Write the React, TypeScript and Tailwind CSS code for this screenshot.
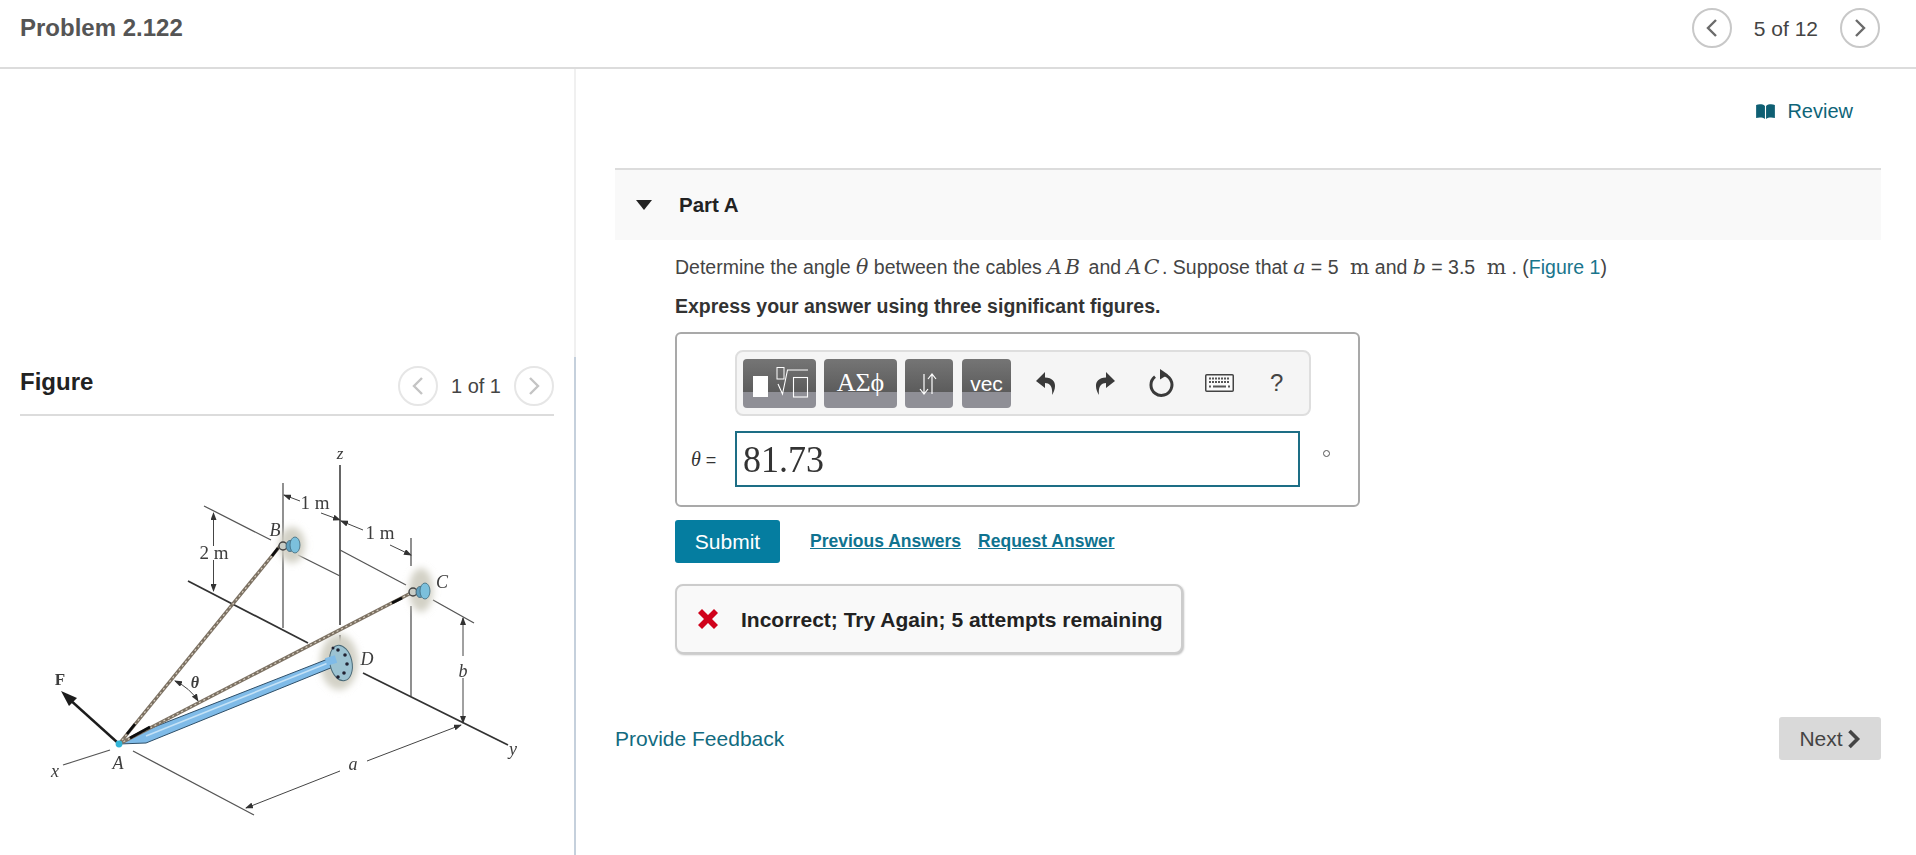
const sans = "font-['Liberation_Sans',Arial,sans-serif]";
const math = "font-['DejaVu_Serif',serif] text-[20.5px]";

const Chevron = ({ dir, color }: { dir: "left" | "right"; color: string }) => (
  <svg width="14" height="20" viewBox="0 0 14 20" fill="none">
    <path
      d={dir === "left" ? "M11 2 L3 10 L11 18" : "M3 2 L11 10 L3 18"}
      stroke={color}
      strokeWidth="2.4"
    />
  </svg>
);

const Pager = ({ label, light, gap, size }: { label: string; light?: boolean; gap: string; size: string }) => (
  <div className={`flex items-center ${gap}`}>
    <div className={`flex h-[40px] w-[40px] items-center justify-center rounded-full border-2 ${light ? "border-[#e6e6e6]" : "border-[#c8c8c8]"}`}>
      <Chevron dir="left" color={light ? "#c4c4c4" : "#6b6b6b"} />
    </div>
    <span className={`${size} leading-none text-[#444]`}>{label}</span>
    <div className={`flex h-[40px] w-[40px] items-center justify-center rounded-full border-2 ${light ? "border-[#e6e6e6]" : "border-[#c8c8c8]"}`}>
      <Chevron dir="right" color={light ? "#c4c4c4" : "#6b6b6b"} />
    </div>
  </div>
);

const Bolt = ({ x, y }: { x: number; y: number }) => (
  <g>
    <circle cx={x} cy={y} r="4" fill="#c9cdc6" stroke="#444" strokeWidth="1.4" />
    <ellipse cx={x + 7} cy={y} rx="4" ry="5.5" fill="#5e9fbd" stroke="#3d6172" strokeWidth="0.8" />
    <ellipse cx={x + 12} cy={y - 1} rx="5" ry="8" fill="#7cc0dc" stroke="#41697b" strokeWidth="0.8" />
  </g>
);

const Figure = () => (
  <svg width="540" height="425" viewBox="20 430 540 425" className="block">
    <defs>
      <filter id="soft" x="-5%" y="-5%" width="110%" height="110%">
        <feGaussianBlur stdDeviation="0.4" />
      </filter>
      <filter id="halo" x="-50%" y="-50%" width="200%" height="200%">
        <feGaussianBlur stdDeviation="3.5" />
      </filter>
      <marker id="tip" markerWidth="8" markerHeight="6" refX="7" refY="3" orient="auto-start-reverse">
        <path d="M0 0 L8 3 L0 6 Z" fill="#333" />
      </marker>
    </defs>
    <g filter="url(#soft)">
      {/* back and floor lines */}
      <g stroke="#555" strokeWidth="1.3" fill="none">
        <path d="M204 508 L271 542 M298 557 L340 578 M340 552 L406 587 M433 602 L474 625" />
        <path d="M283 485 L283 630" />
        <path d="M411 540 L411 568 M411 608 L411 698" />
        <path d="M340 467 L340 627 M340 637 L340 647" strokeWidth="1.8" />
        <path d="M63 767 L110 752 M133 753 L254 817" />
      </g>
      <path d="M188 583 L308 645 M363 675 L508 747" stroke="#333" strokeWidth="1.8" fill="none" />
      {/* dimension lines */}
      <g stroke="#444" strokeWidth="1" fill="none">
        <path d="M213.5 548 L213.5 515" markerEnd="url(#tip)" />
        <path d="M213.5 562 L213.5 593" markerEnd="url(#tip)" />
        <path d="M463 658 L463 620" markerEnd="url(#tip)" />
        <path d="M463 680 L463 725" markerEnd="url(#tip)" />
        <path d="M300 503 L284 497" markerEnd="url(#tip)" />
        <path d="M321 515 L340 522" markerEnd="url(#tip)" />
        <path d="M363 532 L341 523" markerEnd="url(#tip)" />
        <path d="M390 547 L411 557" markerEnd="url(#tip)" />
        <path d="M340 773 L246 810" markerEnd="url(#tip)" />
        <path d="M367 763 L461 727" markerEnd="url(#tip)" />
        <path d="M175 683 Q190 690 198 703" markerStart="url(#tip)" markerEnd="url(#tip)" />
      </g>
      {/* halos behind the anchors */}
      <g filter="url(#halo)" fill="#d3d1c6">
        <ellipse cx="292" cy="547" rx="13" ry="18" />
        <ellipse cx="421" cy="592" rx="12" ry="22" />
        <ellipse cx="339" cy="664" rx="19" ry="28" />
      </g>
      {/* rod AD */}
      <path d="M119 746 L144 733 L333 659 L333 669 L146 745 Z" fill="#7fbbe8" stroke="#2f4f68" strokeWidth="1" />
      <path d="M146 738 L333 663" stroke="#c5e2f6" strokeWidth="1.6" />
      <ellipse cx="341" cy="665" rx="11" ry="18" fill="#9cc3d2" stroke="#4a6a78" strokeWidth="1" transform="rotate(-12 341 665)" />
      <g fill="#223">
        <circle cx="338" cy="652" r="1.8" />
        <circle cx="345" cy="657" r="1.8" />
        <circle cx="347" cy="666" r="1.8" />
        <circle cx="344" cy="675" r="1.8" />
        <circle cx="338" cy="679" r="1.8" />
        <circle cx="333" cy="650" r="1.5" />
      </g>
      <path d="M326 664 L336 661" stroke="#7fbbe8" strokeWidth="8" />
      {/* cables */}
      <path d="M119 746 L280 548 M119 746 L411 595" stroke="#7d7264" strokeWidth="3.4" fill="none" />
      <path d="M119 746 L280 548 M119 746 L411 595" stroke="#d8cfc0" strokeWidth="1.2" strokeDasharray="2 3" fill="none" />
      <path d="M272 558 L278 550 M392 605 L402 600 M127 736 L135 726 M130 740 L150 729" stroke="#111" strokeWidth="2.8" />
      {/* anchors B and C */}
      <Bolt x={283} y={548} />
      <Bolt x={413} y={594} />
      {/* force F */}
      <path d="M118 745 L68 700" stroke="#1c1c1c" strokeWidth="2.4" />
      <path d="M61 693 L77 700 L69 708 Z" fill="#1c1c1c" />
      <circle cx="119" cy="746" r="3.4" fill="#31b4d8" />
      {/* labels */}
      <g fill="#3c3c3c" fontFamily="'Liberation Serif', serif" fontSize="18" textAnchor="middle">
        <text x="340" y="461" fontStyle="italic" fontSize="17">z</text>
        <text x="315" y="511" fontSize="19">1 m</text>
        <text x="380" y="541" fontSize="19">1 m</text>
        <text x="214" y="561" fontSize="19">2 m</text>
        <text x="275" y="538" fontStyle="italic">B</text>
        <text x="442" y="590" fontStyle="italic">C</text>
        <text x="367" y="667" fontStyle="italic">D</text>
        <text x="463" y="679" fontStyle="italic">b</text>
        <text x="353" y="772" fontStyle="italic">a</text>
        <text x="118" y="771" fontStyle="italic">A</text>
        <text x="55" y="779" fontStyle="italic">x</text>
        <text x="513" y="757" fontStyle="italic">y</text>
        <text x="195" y="690" fontStyle="italic" fontWeight="bold" fontSize="16">θ</text>
        <text x="60" y="687" fontWeight="bold" fontSize="17">F</text>
      </g>
    </g>
  </svg>
);

const ToolButton = ({ w, children }: { w: string; children: React.ReactNode }) => (
  <div className={`flex h-[49px] ${w} items-center justify-center overflow-hidden rounded-[4px] bg-[linear-gradient(#757575_0,#5c5c5c_33px,#8f8f96_33px)] text-white`}>
    {children}
  </div>
);

const Toolbar = () => (
  <div className="flex h-[66px] w-[576px] items-center rounded-[8px] border-2 border-[#dedede] bg-[#f5f5f5] pl-[6px]">
    <div className="flex">
      <ToolButton w="w-[73px]">
        <svg width="73" height="49" viewBox="0 0 73 49">
          <rect x="10" y="17" width="15" height="21" fill="#fff" />
          <rect x="34" y="8.5" width="7" height="11.5" fill="none" stroke="#fff" strokeWidth="1" />
          <path d="M35 25 L39.5 35 L44.5 11 L65 11" fill="none" stroke="#fff" strokeWidth="1.1" />
          <rect x="50.5" y="18.5" width="14" height="19.5" fill="none" stroke="#fff" strokeWidth="1.1" />
        </svg>
      </ToolButton>
      <div className="ml-[8px]">
        <ToolButton w="w-[73px]">
          <span className="font-['Liberation_Serif',serif] text-[26px] leading-none">ΑΣϕ</span>
        </ToolButton>
      </div>
      <div className="ml-[8px]">
        <ToolButton w="w-[48px]">
          <svg width="48" height="49" viewBox="0 0 48 49" fill="none" stroke="#fff" strokeWidth="1.2">
            <path d="M19 15 L19 35 M15 30 L19 35 L23 30" />
            <path d="M27 35 L27 15 M23 20 L27 15 L31 20" />
          </svg>
        </ToolButton>
      </div>
      <div className="ml-[9px]">
        <ToolButton w="w-[49px]">
          <span className="text-[21px] leading-none">vec</span>
        </ToolButton>
      </div>
    </div>
    <div className="ml-[7px] grid grid-cols-5 items-center">
      <div className="flex w-[57.5px] justify-center">
        <svg width="21" height="23" viewBox="0 0 21 23" fill="#3a3a3a">
          <path d="M9 0 L0 9 L9 16 L9 11 C14 11 17 15 16 23 C20 17 22 6 9 5.5 Z" />
        </svg>
      </div>
      <div className="flex w-[57.5px] justify-center">
        <svg width="21" height="23" viewBox="0 0 21 23" fill="#3a3a3a">
          <path d="M12 0 L21 9 L12 16 L12 11 C7 11 4 15 5 23 C1 17 -1 6 12 5.5 Z" />
        </svg>
      </div>
      <div className="flex w-[57.5px] justify-center">
        <svg width="26" height="28" viewBox="0 0 26 28" fill="none">
          <path d="M14 5.5 A10.5 10.5 0 1 1 6 7.6" stroke="#3a3a3a" strokeWidth="3" />
          <path d="M11 0 L19 5.5 L11 10.5 Z" fill="#3a3a3a" />
        </svg>
      </div>
      <div className="flex w-[57.5px] justify-center">
        <svg width="29" height="18" viewBox="0 0 29 18" fill="none">
          <rect x="0.75" y="0.75" width="27.5" height="16.5" rx="1" fill="#fafafa" stroke="#444" strokeWidth="1.5" />
          <path d="M4 4.5 H25 M4 8 H25" stroke="#555" strokeWidth="1.8" strokeDasharray="2 1" />
          <path d="M4 12.5 H6 M8 12.5 H21 M23 12.5 H25" stroke="#555" strokeWidth="1.8" />
        </svg>
      </div>
      <div className="flex w-[57.5px] justify-center text-[24px] leading-none text-[#444]">?</div>
    </div>
  </div>
);

export default function App() {
  return (
    <div className={`h-[855px] w-full overflow-hidden bg-white ${sans}`}>
      <header className="flex h-[69px] items-center justify-between border-b-2 border-[#dcdcdc] pb-[19px] pl-[20px] pr-[36px] pt-[8px]">
        <h1 className="text-[24px] font-bold text-[#555]">Problem 2.122</h1>
        <Pager label="5 of 12" size="text-[21px]" gap="gap-[22px]" />
      </header>

      <div className="flex h-[786px]">
        <aside className="flex w-[576px] flex-col">
          <div className="h-[288px] border-r-2 border-[#f0f0f0]" />
          <div className="flex-1 border-r-2 border-[#c5d0dc] pl-[20px] pr-[20px]">
            <div className="flex h-[59px] items-start justify-between border-b-2 border-[#dcdcdc] pt-[7px]">
              <h2 className="text-[24px] font-bold text-[#222]">Figure</h2>
              <div className="pt-[2px]">
                <Pager label="1 of 1" size="text-[20px]" light gap="gap-[13px]" />
              </div>
            </div>
            <div className="mt-[12px]">
              <Figure />
            </div>
          </div>
        </aside>

        <main className="flex-1 pl-[39px] pr-[35px]">
          <div className="flex h-[99px] items-start justify-end pr-[28px] pt-[30px]">
            <div className="flex items-center gap-[12px] text-[20px] leading-[24px] text-[#0e6478]">
              <svg width="19" height="15" viewBox="0 0 20 16" fill="#0e5f73">
                <path d="M0 1 C3 0 7 0 9.4 2 L9.4 16 C7 14 3 14 0 15 Z" />
                <path d="M20 1 C17 0 13 0 10.6 2 L10.6 16 C13 14 17 14 20 15 Z" />
              </svg>
              Review
            </div>
          </div>

          <div className="flex h-[72px] items-center border-t-2 border-[#dcdcdc] bg-[#f9f9f9] pl-[21px]">
            <svg width="16" height="10" viewBox="0 0 16 10" fill="#222">
              <path d="M0 0 H16 L8 10 Z" />
            </svg>
            <span className="ml-[27px] text-[20.5px] font-bold text-[#222]">Part A</span>
          </div>

          <div className="pl-[60px]">
            <p className="mt-[13px] h-[28px] whitespace-nowrap text-[19.5px] leading-[28px] text-[#444]">
              Determine the angle <i className={math}>θ</i> between the cables{" "}
              <i className={`${math} tracking-[3px]`}>AB</i> and{" "}
              <i className={`${math} tracking-[2.5px]`}>AC</i>. Suppose that{" "}
              <i className={math}>a</i> = 5{" "}
              <span className={`${math} ml-[6px]`}>m</span> and{" "}
              <i className={math}>b</i> = 3.5{" "}
              <span className={`${math} ml-[6px]`}>m</span> . (
              <span className="text-[#19758c]">Figure 1</span>)
            </p>
            <p className="mt-[11px] text-[19.5px] font-bold leading-[28px] text-[#333]">
              Express your answer using three significant figures.
            </p>

            <div className="mt-[12px] h-[175px] w-[685px] rounded-[6px] border-2 border-[#a9a9a9] pl-[58px] pt-[16px]">
              <Toolbar />
              <div className="relative mt-[15px] flex items-center">
                <div className="absolute left-[-44px] text-[18px] text-[#333]">
                  <i className="font-['Liberation_Serif',serif] text-[20px]">θ</i> =
                </div>
                <div className="flex h-[56px] w-[565px] items-center border-2 border-[#1d6e85] pl-[6px] font-['Liberation_Serif',serif] text-[36px] text-[#333]">
                  <span className="inline-block scale-y-[1.07]">81.73</span>
                </div>
                <span className="mb-[12px] ml-[23px] h-[7px] w-[7px] rounded-full border border-[#555]" />
              </div>
            </div>

            <div className="mt-[13px] flex items-center">
              <div className="flex h-[43px] w-[105px] items-center justify-center rounded-[3px] bg-[#057da0] text-[21px] text-white">
                Submit
              </div>
              <a className="ml-[30px] text-[17.5px] font-bold text-[#0f7390] underline">Previous Answers</a>
              <a className="ml-[17px] text-[17.5px] font-bold text-[#0f7390] underline">Request Answer</a>
            </div>

            <div className="mt-[21px] flex h-[70px] w-[508px] items-center rounded-[8px] border-2 border-[#cccccc] bg-[#f9f9f9] pl-[21px] shadow-[1px_1px_2px_rgba(0,0,0,0.25)]">
              <svg width="20" height="20" viewBox="0 0 20 20" fill="#d0021b">
                <path d="M4 0 L10 6 L16 0 L20 4 L14 10 L20 16 L16 20 L10 14 L4 20 L0 16 L6 10 L0 4 Z" />
              </svg>
              <span className="ml-[23px] pt-[2px] text-[21px] font-bold text-[#222]">Incorrect; Try Again; 5 attempts remaining</span>
            </div>
          </div>

          <div className="mt-[63px] flex items-center justify-between">
            <a className="text-[21px] text-[#126b80]">Provide Feedback</a>
            <div className="flex h-[43px] w-[102px] items-center justify-center gap-[4px] rounded-[3px] bg-[#d9d9d9] text-[21px] text-[#444]">
              Next
              <svg width="14" height="20" viewBox="0 0 14 20" fill="none">
                <path d="M2.5 2 L10.5 10 L2.5 18" stroke="#444" strokeWidth="3.6" />
              </svg>
            </div>
          </div>
        </main>
      </div>
    </div>
  );
}
